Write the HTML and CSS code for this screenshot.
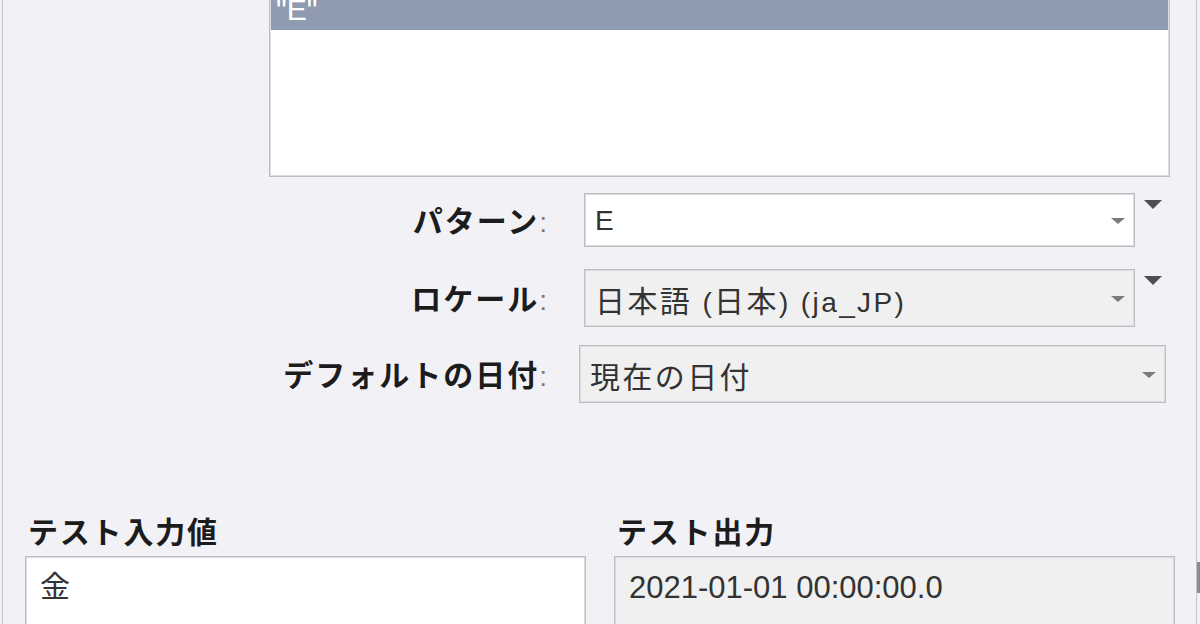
FILE: index.html
```html
<!DOCTYPE html>
<html lang="ja">
<head>
<meta charset="utf-8">
<title>Date pattern</title>
<link rel="stylesheet" href="styles.css">
</head>
<body>
<div class="frame">
  <div class="listbox">
    <div class="row sel">"E"</div>
  </div>
  <div class="form">
    <div class="field f1">
      <div class="lbl"><span class="jp">パターン</span><span class="colon">:</span></div>
      <div class="combo"><span class="val">E</span><span class="caret"></span></div>
      <span class="more"></span>
    </div>
    <div class="field f2">
      <div class="lbl"><span class="jp">ロケール</span><span class="colon">:</span></div>
      <div class="combo"><span class="val"><span class="jp">日本語</span> (<span class="jp">日本</span>) (ja_JP)</span><span class="caret"></span></div>
      <span class="more"></span>
    </div>
    <div class="field f3">
      <div class="lbl"><span class="jp">デフォルトの日付</span><span class="colon">:</span></div>
      <div class="combo"><span class="val"><span class="jp">現在の日付</span></span><span class="caret"></span></div>
    </div>
  </div>
  <div class="tests">
    <div class="test in">
      <div class="tlabel">テスト入力値</div>
      <div class="tbox"><span class="jp">金</span></div>
    </div>
    <div class="test out">
      <div class="tlabel">テスト出力</div>
      <div class="tbox">2021-01-01 00:00:00.0</div>
    </div>
  </div>
</div>
<div class="thumb"></div>
</body>
</html>
```

FILE: styles.css
```css
html, body {
  margin: 0;
  height: 624px;
  overflow: hidden;
}
body {
  position: relative;
  background: #f2f2f6;
  font-family: "Liberation Sans", "Noto Sans CJK JP", sans-serif;
  font-size: 28px;
  color: #222;
}
.jp {
  font-family: "Noto Sans CJK JP", "Liberation Sans", sans-serif;
  font-size: 30px;
}
.frame {
  height: 624px;
  margin-left: 2px;
  margin-right: 3px;
  border-left: 1px solid #c4c4ca;
  border-right: 1px solid #c4c4ca;
  overflow: hidden;
}
.listbox {
  margin: -12px 0 0 266px;
  width: 901px;
  height: 189px;
  box-sizing: border-box;
  background: #fff;
  border: 1px solid #bdbdc3;
  box-shadow: inset 0 0 0 1px #dedee2;
  padding: 1px;
}
.row {
  height: 40px;
  line-height: 40px;
  font-size: 30px;
  padding-left: 5px;
  white-space: nowrap;
}
.sel {
  background: #8f9bb1;
  color: #fff;
}
.form {
  display: flex;
  flex-direction: column;
}
.field {
  display: flex;
  align-items: flex-start;
}
.f1 { margin-top: 16px; }
.f2 { margin-top: 22px; }
.f3 { margin-top: 18px; }
.lbl {
  width: 545px;
  flex: none;
  align-self: center;
  text-align: right;
  white-space: nowrap;
  line-height: 36px;
  padding-top: 2px;
}
.lbl .jp {
  font-weight: bold;
  letter-spacing: 2px;
  color: #1c1c1c;
}
.colon {
  color: #7a7a7a;
  font-size: 28px;
  padding-right: 1px;
}
.combo {
  flex: none;
  box-sizing: border-box;
  width: 551px;
  height: 54px;
  margin-left: 36px;
  display: flex;
  align-items: center;
  padding: 2px 0 0 10px;
  background: #fff;
  border: 1px solid #bdbdc3;
  box-shadow: inset 0 0 0 1px #dcdce0;
  color: #333;
}
.f2 .combo, .f3 .combo {
  height: 58px;
  background: #f0f0f0;
}
.f3 .combo {
  width: 587px;
  margin-left: 31px;
}
.val {
  letter-spacing: 2.4px;
  white-space: nowrap;
}
.caret {
  margin-left: auto;
  margin-right: 9px;
  width: 0;
  height: 0;
  border-left: 7px solid transparent;
  border-right: 7px solid transparent;
  border-top: 6px solid #7b7b7b;
}
.more {
  flex: none;
  margin: 7px 0 0 9px;
  width: 0;
  height: 0;
  border-left: 9px solid transparent;
  border-right: 9px solid transparent;
  border-top: 9px solid #4f4f4f;
}
.tests {
  display: flex;
  gap: 28px;
  margin: 109px 0 0 22px;
}
.test {
  width: 561px;
  flex: none;
}
.tlabel {
  font-family: "Noto Sans CJK JP", "Liberation Sans", sans-serif;
  font-size: 30px;
  font-weight: bold;
  letter-spacing: 1.8px;
  line-height: 36px;
  height: 36px;
  padding-left: 3px;
  margin-bottom: 8px;
  color: #1c1c1c;
}
.tbox {
  box-sizing: border-box;
  height: 120px;
  padding: 13px 14px;
  line-height: 36px;
  background: #fff;
  border: 1px solid #bdbdc3;
  box-shadow: inset 0 0 0 1px #dcdce0;
  color: #333;
}
.in .tbox {
  padding-top: 9px;
}
.out .tbox {
  background: #f0f0f0;
  font-size: 31px;
}
.thumb {
  position: absolute;
  left: 1197px;
  top: 562px;
  width: 3px;
  height: 31px;
  background: #8a8a90;
}
```
